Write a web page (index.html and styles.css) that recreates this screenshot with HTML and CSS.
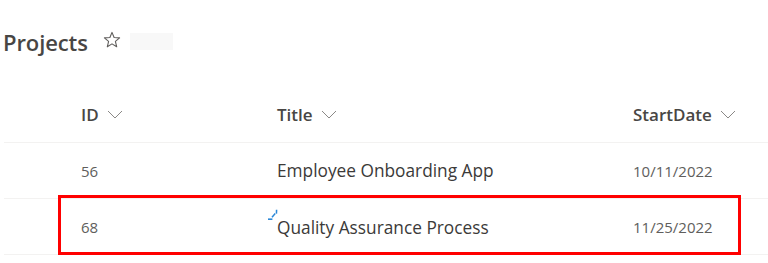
FILE: index.html
```html
<!DOCTYPE html>
<html>
<head>
<meta charset="utf-8">
<link rel="stylesheet" href="styles.css">
</head>
<body>
<div class="page">
  <div class="title-row">
    <h1 class="title">Projects</h1>
    <svg class="star" width="18" height="18" viewBox="0 0 18 18"><path d="M9 1.4 L11.1 6.5 L16.6 6.9 L12.4 10.4 L13.7 15.8 L9 12.9 L4.3 15.8 L5.6 10.4 L1.4 6.9 L6.9 6.5 Z" fill="none" stroke="#605e5c" stroke-width="1.1" stroke-linejoin="round"/></svg>
    <div class="placeholder"></div>
  </div>
  <div class="list">
    <div class="row header">
      <div class="cell">ID <span class="chev"><svg width="16" height="9" viewBox="0 0 16 9"><path d="M1 1 L8 8 L15 1" fill="none" stroke="#8a8886" stroke-width="1"/></svg></span></div>
      <div class="cell">Title <span class="chev"><svg width="16" height="9" viewBox="0 0 16 9"><path d="M1 1 L8 8 L15 1" fill="none" stroke="#8a8886" stroke-width="1"/></svg></span></div>
      <div class="cell">StartDate <span class="chev"><svg width="16" height="9" viewBox="0 0 16 9"><path d="M1 1 L8 8 L15 1" fill="none" stroke="#8a8886" stroke-width="1"/></svg></span></div>
    </div>
    <div class="row">
      <div class="cell muted">56</div>
      <div class="cell main">Employee Onboarding App</div>
      <div class="cell muted">10/11/2022</div>
    </div>
    <div class="row selected">
      <div class="cell muted">68</div>
      <div class="cell main">Quality Assurance Process</div>
      <div class="cell muted">11/25/2022</div>
      <svg class="spinner" width="14" height="14" viewBox="0 0 14 14"><path d="M0 11.2 L4.4 11.2" stroke="#2b88d8" stroke-width="1.6"/><path d="M4 9.2 L7.2 5.6" stroke="#2b88d8" stroke-width="1.5"/><path d="M8.6 1.8 L8.4 5.6" stroke="#2b88d8" stroke-width="1.5"/></svg>
      <div class="highlight"></div>
    </div>
  </div>
</div>
</body>
</html>
```
FILE: styles.css
```css
html, body {
  margin: 0;
  padding: 0;
  background: #ffffff;
}
body {
  font-family: "Open Sans", "Noto Sans", sans-serif;
  color: #323130;
  width: 768px;
  height: 263px;
  overflow: hidden;
}
.page {
  padding-top: 28px;
}
.title-row {
  display: flex;
  align-items: center;
  height: 28px;
  padding-left: 3px;
}
.title {
  margin: 0;
  font-size: 22px;
  font-weight: 600;
  color: #484644;
  line-height: 28px;
  letter-spacing: -0.1px;
}
.star {
  margin-left: 15px;
  margin-top: -4px;
}
.placeholder {
  width: 43px;
  height: 17px;
  margin-left: 9px;
  margin-top: -1px;
  background: #f8f8f8;
}
.list {
  margin-top: 31px;
  margin-left: 4px;
}
.row {
  position: relative;
  display: grid;
  grid-template-columns: 196px 356px 1fr;
  align-items: center;
  height: 55px;
  padding-left: 77px;
  border-bottom: 1px solid #f3f2f1;
}
.header .cell {
  font-size: 17px;
  font-weight: 600;
  color: #484644;
  display: flex;
  align-items: center;
}
.chev {
  display: inline-flex;
  margin-left: 8px;
}
.cell {
  white-space: nowrap;
}
.muted {
  color: #605e5c;
  font-size: 15px;
}
.main {
  font-size: 17.3px;
  color: #3b3a39;
}
.row.selected .main {
  padding-top: 2px;
}
.spinner {
  position: absolute;
  left: 264px;
  top: 9px;
}
.highlight {
  position: absolute;
  left: 54px;
  top: -4px;
  width: 677px;
  height: 54px;
  border: 3px solid #ff0000;
}
```
